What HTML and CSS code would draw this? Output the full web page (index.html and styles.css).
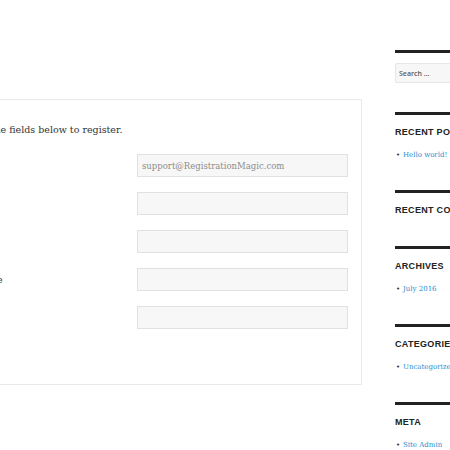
FILE: index.html
```html
<!DOCTYPE html>
<html lang="en">
<head>
<meta charset="utf-8">
<title>Register</title>
<link rel="stylesheet" href="styles.css">
</head>
<body>
<div class="page">
  <main class="main">
    <div class="card">
      <p class="intro">Please fill the fields below to register.</p>
      <form class="form">
        <div class="row"><label class="label">Email</label><input class="field" type="email" placeholder="support@RegistrationMagic.com"></div>
        <div class="row"><label class="label">First Name</label><input class="field" type="text"></div>
        <div class="row"><label class="label">Last Name</label><input class="field" type="text"></div>
        <div class="row"><label class="label">Home Phone</label><input class="field" type="text"></div>
        <div class="row"><label class="label">City</label><input class="field" type="text"></div>
      </form>
    </div>
  </main>
  <aside class="sidebar">
    <section class="widget widget-search">
      <input class="search" type="search" placeholder="Search …">
    </section>
    <section class="widget">
      <h2 class="widget-title">Recent Posts</h2>
      <ul class="links"><li><a href="#">Hello world!</a></li></ul>
    </section>
    <section class="widget widget-empty">
      <h2 class="widget-title">Recent Comments</h2>
    </section>
    <section class="widget">
      <h2 class="widget-title">Archives</h2>
      <ul class="links"><li><a href="#">July 2016</a></li></ul>
    </section>
    <section class="widget">
      <h2 class="widget-title">Categories</h2>
      <ul class="links"><li><a href="#">Uncategorized</a></li></ul>
    </section>
    <section class="widget">
      <h2 class="widget-title">Meta</h2>
      <ul class="links"><li><a href="#">Site Admin</a></li></ul>
    </section>
  </aside>
</div>
</body>
</html>
```
FILE: styles.css
```css
html, body {
  margin: 0;
  padding: 0;
  overflow: hidden;
  background: #fff;
}

.page {
  display: flex;
  align-items: flex-start;
  width: 720px;
}

.main {
  flex: 0 0 450px;
  margin-left: -88px;
  padding-top: 99px;
}

.card {
  box-sizing: border-box;
  width: 450px;
  border: 1px solid #eaeaea;
  padding: 22px 13px 55px 28px;
}

.intro {
  margin: 0 0 16px;
  font: 9.5px/16px "DejaVu Serif", serif;
  color: #333;
  white-space: nowrap;
}

.row {
  display: grid;
  grid-template-columns: 1fr 211px;
  align-items: center;
  margin-bottom: 15px;
}

.row:last-child {
  margin-bottom: 0;
}

.label {
  font: 9.5px/16px "DejaVu Serif", serif;
  color: #333;
  white-space: nowrap;
}

.field {
  box-sizing: border-box;
  width: 100%;
  height: 23px;
  margin: 0;
  padding: 0 4px;
  border: 1px solid #e1e1e1;
  border-radius: 0;
  background: #f7f7f7;
  font: 8.5px "DejaVu Serif", serif;
  color: #333;
  outline: none;
}

.field::placeholder {
  color: #8c8c8c;
  opacity: 1;
}

.sidebar {
  flex: 0 0 240px;
  margin-left: 33px;
  padding-top: 50px;
}

.widget {
  border-top: 3px solid #222;
  padding-top: 11px;
  margin-bottom: 29px;
}

.widget-search {
  padding-top: 10px;
}

.widget-empty {
  margin-bottom: 30px;
}

.search {
  box-sizing: border-box;
  display: block;
  width: 200px;
  height: 20px;
  margin: 0;
  padding: 0 3px;
  border: 1px solid #e6e6e6;
  border-radius: 2px;
  background: #f7f7f7;
  font: 600 7px "Noto Sans", sans-serif;
  color: #555;
  outline: none;
  -webkit-appearance: none;
}

.search::placeholder {
  color: #666;
  opacity: 1;
}

.widget-title {
  margin: 0;
  font: bold 9px/12px "Liberation Sans", Arial, sans-serif;
  letter-spacing: 0.3px;
  text-transform: uppercase;
  color: #222;
  white-space: nowrap;
}

.links {
  list-style: none;
  margin: 11px 0 0;
  padding: 0;
}

.links li {
  display: flex;
  font: 7px/12px "DejaVu Serif", serif;
  white-space: nowrap;
}

.links li::before {
  content: "•";
  flex: 0 0 7px;
  padding-left: 1px;
  color: #333;
}

.links a {
  color: #2b8ccc;
  text-decoration: none;
}
```
